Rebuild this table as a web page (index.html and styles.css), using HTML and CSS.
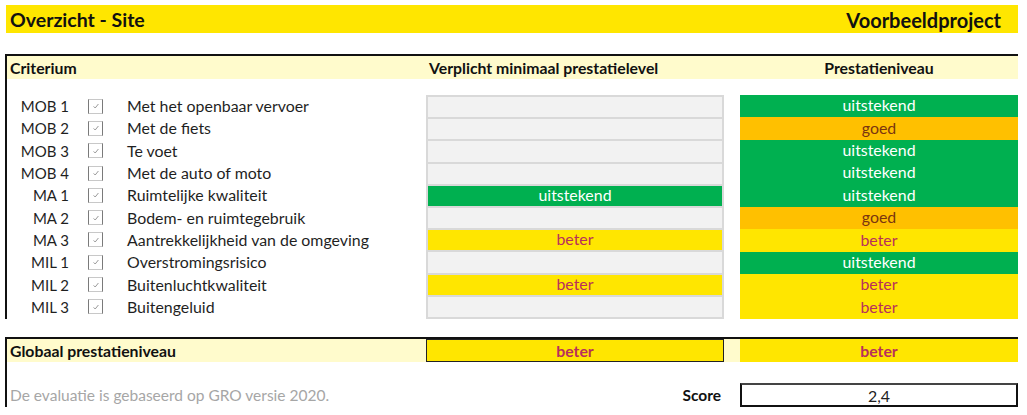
FILE: index.html
```html
<!DOCTYPE html>
<html lang="nl">
<head>
<meta charset="utf-8">
<title>Overzicht - Site</title>
<link rel="stylesheet" href="styles.css">
</head>
<body>
<div class="page">
  <div class="titlebar">
    <span class="title">Overzicht - Site</span>
    <span class="project">Voorbeeldproject</span>
  </div>

  <section class="frame main">
    <div class="headrow">
      <div class="h-crit">Criterium</div>
      <div class="h-min">Verplicht minimaal prestatielevel</div>
      <div class="h-sep"></div>
      <div class="h-niv">Prestatieniveau</div>
    </div>
    <div class="rows">
      <div class="labels">
        <div class="lrow"><span class="code">MOB 1</span><span class="cb"><svg viewBox="0 0 8 8"><path d="M1.6 4.4 L3.2 6 L6.4 2"/></svg></span><span class="lbl">Met het openbaar vervoer</span></div>
        <div class="lrow"><span class="code">MOB 2</span><span class="cb"><svg viewBox="0 0 8 8"><path d="M1.6 4.4 L3.2 6 L6.4 2"/></svg></span><span class="lbl">Met de fiets</span></div>
        <div class="lrow"><span class="code">MOB 3</span><span class="cb"><svg viewBox="0 0 8 8"><path d="M1.6 4.4 L3.2 6 L6.4 2"/></svg></span><span class="lbl">Te voet</span></div>
        <div class="lrow"><span class="code">MOB 4</span><span class="cb"><svg viewBox="0 0 8 8"><path d="M1.6 4.4 L3.2 6 L6.4 2"/></svg></span><span class="lbl">Met de auto of moto</span></div>
        <div class="lrow"><span class="code">MA 1</span><span class="cb"><svg viewBox="0 0 8 8"><path d="M1.6 4.4 L3.2 6 L6.4 2"/></svg></span><span class="lbl">Ruimtelijke kwaliteit</span></div>
        <div class="lrow"><span class="code">MA 2</span><span class="cb"><svg viewBox="0 0 8 8"><path d="M1.6 4.4 L3.2 6 L6.4 2"/></svg></span><span class="lbl">Bodem- en ruimtegebruik</span></div>
        <div class="lrow"><span class="code">MA 3</span><span class="cb"><svg viewBox="0 0 8 8"><path d="M1.6 4.4 L3.2 6 L6.4 2"/></svg></span><span class="lbl">Aantrekkelijkheid van de omgeving</span></div>
        <div class="lrow"><span class="code">MIL 1</span><span class="cb"><svg viewBox="0 0 8 8"><path d="M1.6 4.4 L3.2 6 L6.4 2"/></svg></span><span class="lbl">Overstromingsrisico</span></div>
        <div class="lrow"><span class="code">MIL 2</span><span class="cb"><svg viewBox="0 0 8 8"><path d="M1.6 4.4 L3.2 6 L6.4 2"/></svg></span><span class="lbl">Buitenluchtkwaliteit</span></div>
        <div class="lrow"><span class="code">MIL 3</span><span class="cb"><svg viewBox="0 0 8 8"><path d="M1.6 4.4 L3.2 6 L6.4 2"/></svg></span><span class="lbl">Buitengeluid</span></div>
      </div>
      <div class="mincol">
        <div class="mcell"></div>
        <div class="mcell"></div>
        <div class="mcell"></div>
        <div class="mcell"></div>
        <div class="mcell green">uitstekend</div>
        <div class="mcell"></div>
        <div class="mcell yellow">beter</div>
        <div class="mcell"></div>
        <div class="mcell yellow">beter</div>
        <div class="mcell"></div>
      </div>
      <div class="sep"></div>
      <div class="nivcol">
        <div class="ncell green">uitstekend</div>
        <div class="ncell orange">goed</div>
        <div class="ncell green">uitstekend</div>
        <div class="ncell green">uitstekend</div>
        <div class="ncell green">uitstekend</div>
        <div class="ncell orange">goed</div>
        <div class="ncell yellow">beter</div>
        <div class="ncell green">uitstekend</div>
        <div class="ncell yellow">beter</div>
        <div class="ncell yellow">beter</div>
      </div>
    </div>
  </section>

  <section class="frame global">
    <div class="headrow grow">
      <div class="h-crit">Globaal prestatieniveau</div>
      <div class="g-min"><span>beter</span></div>
      <div class="h-sep"></div>
      <div class="g-niv">beter</div>
    </div>
    <div class="footrow">
      <div class="note">De evaluatie is gebaseerd op GRO versie 2020.</div>
      <div class="score-lbl">Score</div>
      <div class="h-sep blank"></div>
      <div class="score">2,4</div>
    </div>
  </section>
</div>
</body>
</html>
```

FILE: styles.css
```css
* { box-sizing: border-box; }

html, body {
  margin: 0;
  padding: 0;
  background: #ffffff;
}

body {
  font-family: Lato, "Open Sans", "Liberation Sans", sans-serif;
  color: #1a1a1a;
}

.page {
  padding: 5px 0 0 5px;
  width: 1018px;
}

.titlebar {
  margin-left: 1px;
  height: 28px;
  background: #ffe600;
  display: flex;
  align-items: center;
  justify-content: space-between;
  padding: 1px 17px 0 4px;
  font-weight: 700;
  font-size: 20px;
  color: #111;
}

.title { font-size: 19.5px; }

.frame {
  border-left: 2px solid #111;
  border-top: 2px solid #111;
  width: 1013px;
}

.main {
  margin-top: 21px;
}

.headrow {
  display: grid;
  grid-template-columns: 419px 298px 16px 278px;
  height: 23px;
  background: #fffbcc;
  font-weight: 700;
  font-size: 15.8px;
  align-items: center;
  color: #111;
}

.h-crit { padding-left: 3px; }
.h-min { padding-left: 3px; }
.h-niv { text-align: center; }

.rows {
  display: grid;
  grid-template-columns: 419px 298px 16px 278px;
  height: 224px;
  margin-top: 16px;
  margin-bottom: 1px;
}

.labels {
  display: grid;
  grid-template-rows: repeat(10, minmax(0, 1fr));
  font-size: 15.9px;
  line-height: 18px;
  color: #1f1f1f;
  padding-bottom: 1px;
}

.lrow {
  display: grid;
  grid-template-columns: 62px 19px 15px 24px 1fr;
  align-items: center;
}

.code {
  grid-column: 1;
  text-align: right;
  white-space: nowrap;
  font-size: 15px;
}

.cb {
  grid-column: 3;
  width: 15px;
  height: 15px;
  border-left: 1.5px solid #7a7a7a;
  border-right: 1.5px solid #7a7a7a;
  border-top: 1px solid #c8c8c8;
  border-bottom: 1px solid #c8c8c8;
  background: #fff;
  display: flex;
  align-items: center;
  justify-content: center;
}

.cb svg {
  width: 8px;
  height: 8px;
  fill: none;
  stroke: #9a9a9a;
  stroke-width: 1;
}

.lbl {
  grid-column: 5;
  white-space: nowrap;
}

.mincol {
  display: grid;
  grid-template-rows: repeat(10, minmax(0, 1fr));
  gap: 2px;
  padding: 2px;
  background: #d9d9d9;
}

.mcell, .ncell {
  display: flex;
  align-items: center;
  justify-content: center;
  font-size: 15.9px;
  line-height: 18px;
  padding-bottom: 2px;
}

.mcell { background: #f2f2f2; }

.nivcol {
  display: grid;
  grid-template-rows: repeat(10, minmax(0, 1fr));
}

.green { background: #00b050; color: #ffffff; }
.orange { background: #ffc000; color: #7a3510; }
.yellow { background: #ffe600; color: #b8305c; }

.global {
  margin-top: 18px;
  height: 70px;
}

.grow .g-min {
  height: 23px;
  background: #ffe600;
  border: 1.5px solid #222;
  display: flex;
  align-items: center;
  justify-content: center;
  color: #b8305c;
}

.g-niv {
  height: 23px;
  background: #ffe600;
  display: flex;
  align-items: center;
  justify-content: center;
  color: #b8305c;
}

.footrow {
  display: grid;
  grid-template-columns: 419px 298px 16px 278px;
  margin-top: 21px;
  height: 24px;
  align-items: center;
}

.note {
  padding-left: 3px;
  font-size: 15.5px;
  color: #a6a6a6;
}

.score-lbl {
  text-align: right;
  padding-right: 3px;
  font-weight: 700;
  font-size: 15.5px;
  color: #111;
}

.score {
  height: 24px;
  border: 2px solid #111;
  border-top-color: #444;
  display: flex;
  align-items: center;
  justify-content: center;
  font-size: 15.9px;
  color: #222;
}
```
